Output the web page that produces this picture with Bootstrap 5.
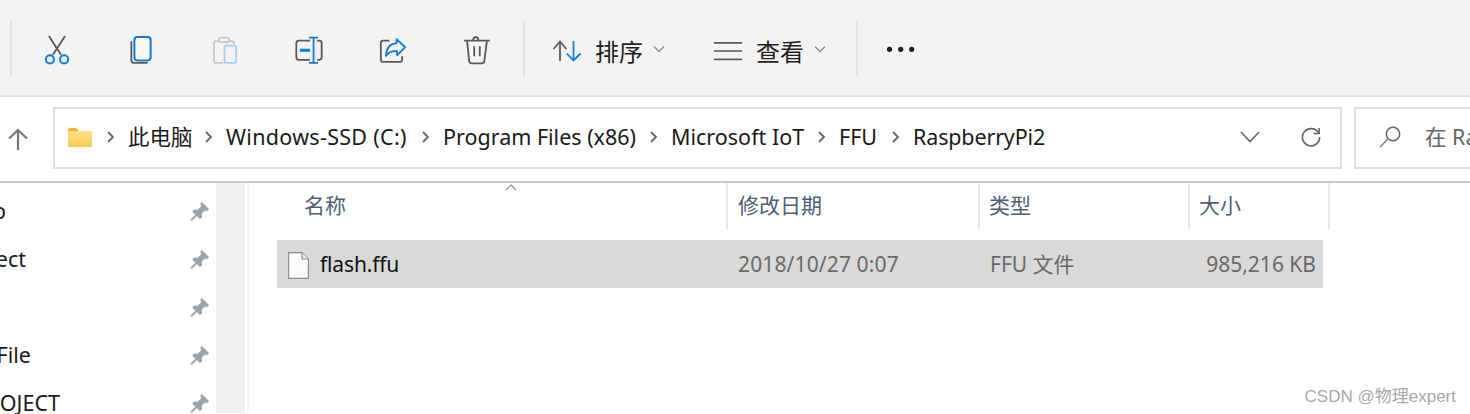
<!DOCTYPE html>
<html lang="zh-CN">
<head>
    <meta charset="UTF-8">
    <title>RaspberryPi2</title>
    <link href="https://cdn.jsdelivr.net/npm/bootstrap@5.3.0/dist/css/bootstrap.min.css" rel="stylesheet">
    <style>
        html, body { height: 414px; overflow: hidden; }
        body { font-family: "Noto Sans", "Noto Sans CJK SC", sans-serif; font-size: 21px; color: #1a1a1a; background: #fff; position: relative; }
        svg { display: block; flex-shrink: 0; }
        .tool-bar { height: 97px; background: #f3f3f3; border-bottom: 2px solid #e3e3e3; padding-top: 3px; padding-left: 10px; }
        .tool-sep { width: 2px; height: 56px; background: #e3e3e3; flex-shrink: 0; }
        .sep-first { margin-right: 3px; }
        .sep-second { margin-left: 4px; margin-right: 27px; }
        .sep-third { margin-left: 30px; margin-right: 28px; }
        .tool-btn { width: 84px; flex-shrink: 0; }
        .tool-label { font-size: 24px; line-height: 32px; margin-top: 4px; margin-left: 13px; margin-right: 10px; color: #1f1f1f; font-family: "Noto Sans CJK SC", sans-serif; }
        .view-ico { margin-left: 48px; }
        .addr-row { height: 86px; border-bottom: 2px solid #c8c8c8; padding-top: 10px; }
        .up-cell { width: 53px; flex-shrink: 0; padding-top: 21px; padding-left: 8px; }
        .addr-box { width: 1289px; flex-shrink: 0; height: 62px; border: 2px solid #dedede; padding-left: 12px; padding-right: 19px; padding-bottom: 2px; font-size: 21.5px; }
        .crumb-sep { width: 36px; flex-shrink: 0; }
        .crumb-first { width: 35px; flex-shrink: 0; }
        .crumb { white-space: nowrap; flex-shrink: 0; }
        .crumb-pc { width: 62px; }
        .crumb-disk { width: 181px; letter-spacing: .3px; }
        .crumb-prog { width: 192px; }
        .crumb-ms { width: 132px; }
        .crumb-ffu { width: 38px; }
        .crumb-pi { letter-spacing: -.15px; }
        .refresh-ico { margin-left: 41px; }
        .search-box { flex: 1; min-width: 0; overflow: hidden; height: 62px; margin-left: 12px; border: 2px solid #dedede; border-right: 0; padding-left: 23px; padding-bottom: 2px; color: #666; white-space: nowrap; font-size: 21.5px; }
        .main-area { height: 230px; }
        .side-pane { width: 216px; flex-shrink: 0; padding-top: 4px; }
        .side-row { height: 48px; font-size: 21.5px; padding-right: 6px; }
        .side-clip { overflow: hidden; white-space: nowrap; }
        .clip-a { width: 6px; }
        .clip-b { width: 26px; }
        .clip-c { width: 31px; }
        .clip-d { width: 60px; }
        .scroll-track { width: 29px; flex-shrink: 0; background: #f0f0f0; }
        .scroll-gap { width: 2px; flex-shrink: 0; margin-left: 2px; background: #f5f5f5; }
        .file-pane { flex: 1; position: relative; }
        .head-row { height: 46px; color: #4d6078; }
        .col-name { width: 477px; padding-left: 55px; }
        .col-date { width: 252px; padding-left: 10px; border-left: 2px solid #e8e8e8; }
        .col-type { width: 210px; padding-left: 9px; border-left: 2px solid #e8e8e8; }
        .col-size { width: 142px; padding-left: 9px; border-left: 2px solid #e8e8e8; border-right: 2px solid #e8e8e8; }
        .sort-caret { position: absolute; left: 256px; top: 1px; }
        .file-row { width: 1046px; height: 48px; margin-left: 28px; margin-top: 11px; padding-top: 2px; background: #d9d9d9; border-radius: 2px; color: #6a6a6a; }
        .cell-name { width: 450px; padding-left: 11px; color: #111; }
        .file-title { margin-left: 11px; letter-spacing: -.15px; }
        .cell-date { width: 252px; padding-left: 11px; letter-spacing: .13px; }
        .cell-type { width: 210px; padding-left: 11px; }
        .cell-size { width: 134px; padding-right: 7px; text-align: right; }
        .csdn-mark { position: absolute; right: 14px; bottom: 6px; font-size: 17px; line-height: 22px; color: #a8a8a8; font-family: "Liberation Sans", "Noto Sans CJK SC", sans-serif; }
    </style>
</head>
<body>
    <!-- command bar -->
    <div class="tool-bar d-flex align-items-center">
        <div class="tool-sep sep-first"></div>
        <div class="tool-btn d-flex justify-content-center">
            <svg width="36" height="36" viewBox="38.250 30 35.500 35.500" fill="none" stroke-width="1.8">
                <path d="M48 35 60 53.5M64 35 52 53.5" stroke="#5a5a5a"/>
                <circle cx="49" cy="58" r="4" stroke="#0f7ddb" stroke-width="2"/>
                <circle cx="63" cy="58" r="4" stroke="#0f7ddb" stroke-width="2"/>
            </svg>
        </div>
        <div class="tool-btn d-flex justify-content-center">
            <svg width="36" height="36" viewBox="121.750 30 35.500 35.500" fill="none" stroke-width="1.8">
                <path d="M130 40V58.5a3 3 0 0 0 3 3H146" stroke="#5a5a5a"/>
                <rect x="133" y="36" width="16" height="23" rx="3" fill="#f9f9f9" stroke="#0f7ddb" stroke-width="2"/>
            </svg>
        </div>
        <div class="tool-btn d-flex justify-content-center">
            <svg width="36" height="36" viewBox="203.750 30 35.500 35.500" fill="none" stroke-width="1.8">
                <path d="M215 40H213a2.500 2.500 0 0 0-2.500 2.500V59a2.500 2.500 0 0 0 2.500 2.500H220M226 40h2a2.500 2.500 0 0 1 2.500 2.500V43" stroke="#c6c6c6"/>
                <rect x="215.500" y="36.500" width="10" height="4.500" rx="1.500" stroke="#c6c6c6"/>
                <rect x="221" y="44.500" width="11.500" height="17" rx="2" stroke="#a9cff0"/>
            </svg>
        </div>
        <div class="tool-btn d-flex justify-content-center">
            <svg width="36" height="36" viewBox="287.250 30 35.500 35.500" fill="none" stroke-width="1.8">
                <path d="M306 39.500H295a2.500 2.500 0 0 0-2.500 2.500V56a2.500 2.500 0 0 0 2.500 2.500H306M313 39.500h2a2.500 2.500 0 0 1 2.500 2.500V56a2.500 2.500 0 0 1-2.500 2.500h-2" stroke="#5a5a5a"/>
                <path d="M309.500 36V62M305 36.500h9M305 61.500h9" stroke="#0f7ddb"/>
                <path d="M296 49h10" stroke="#0f7ddb" stroke-width="3"/>
            </svg>
        </div>
        <div class="tool-btn d-flex justify-content-center">
            <svg width="36" height="36" viewBox="370.750 30 35.500 35.500" fill="none" stroke-width="1.8">
                <path d="M385 39.500H379a2.500 2.500 0 0 0-2.500 2.500V58a2.500 2.500 0 0 0 2.500 2.500H395a2.500 2.500 0 0 0 2.500-2.500V55" stroke="#5a5a5a"/>
                <path d="M392 38 400.500 46 392.500 54V50C387 49.500 384 51 381.500 54.500 382 47 386 42.500 392 42Z" stroke="#0f7ddb" stroke-linejoin="round"/>
            </svg>
        </div>
        <div class="tool-btn d-flex justify-content-center">
            <svg width="36" height="36" viewBox="453 30 35.500 35.500" fill="none" stroke="#5a5a5a" stroke-width="1.8">
                <path d="M458 39.500H483.500M472 39.500V38.500a2.500 2.500 0 0 0-5 0V39.500"/>
                <path d="M461 40 463 59.500a2.500 2.500 0 0 0 2.500 2.500H475.500a2.500 2.500 0 0 0 2.500-2.500L480.500 40"/>
                <path d="M468 45V55M473.500 45V55"/>
            </svg>
        </div>
        <div class="tool-sep sep-second"></div>
        <div class="d-flex align-items-center">
            <svg width="30" height="30" viewBox="552 34 30 30" fill="none" stroke-width="1.8">
                <path d="M560 61V41.500M553.500 49 560 41.500 566.500 49" stroke="#5a5a5a"/>
                <path d="M573.500 41V60M566.800 53.500 573.500 60.500 580.500 53.500" stroke="#0f7ddb"/>
            </svg>
            <span class="tool-label">排序</span>
            <svg width="12" height="8" viewBox="0 0 12 8" fill="none" stroke="#8a8a8a" stroke-width="1.300"><path d="M1 1.500 6 6.500 11 1.500"/></svg>
        </div>
        <div class="d-flex align-items-center">
            <svg class="view-ico" width="30" height="30" viewBox="713 34 30 30" fill="none" stroke="#5a5a5a" stroke-width="1.700">
                <path d="M714 42.800H742M714 51H742M714 59.300H742"/>
            </svg>
            <span class="tool-label">查看</span>
            <svg width="12" height="8" viewBox="0 0 12 8" fill="none" stroke="#8a8a8a" stroke-width="1.300"><path d="M1 1.500 6 6.500 11 1.500"/></svg>
        </div>
        <div class="tool-sep sep-third"></div>
        <svg width="30" height="8" viewBox="886 45 30 8" fill="#1e1e1e">
            <circle cx="889.500" cy="49.300" r="2.600"/><circle cx="900.700" cy="49.300" r="2.600"/><circle cx="911.700" cy="49.300" r="2.600"/>
        </svg>
    </div>

    <!-- address row -->
    <div class="addr-row d-flex align-items-start">
        <div class="up-cell">
            <svg width="20" height="22" viewBox="0 0 20 22" fill="none" stroke="#777" stroke-width="2.200"><path d="M10 22V2M1 10.500 10 2 19 10.500"/></svg>
        </div>
        <div class="addr-box d-flex align-items-center">
            <svg width="26" height="21" viewBox="0 0 26 21">
                <defs><linearGradient id="folderFill" x1="0" y1="0" x2="0" y2="1"><stop offset="0" stop-color="#fde08a"/><stop offset="1" stop-color="#fbcb52"/></linearGradient></defs>
                <path d="M1 3a2 2 0 0 1 2-2h6l3 3v3H1Z" fill="#f2b42c"/>
                <rect x="1" y="4" width="24" height="16" rx="1.500" fill="url(#folderFill)"/>
            </svg>
            <span class="crumb-first d-flex justify-content-center"><svg width="7" height="12" viewBox="0 0 7 12" fill="none" stroke="#666" stroke-width="1.800"><path d="M1 1 6 6 1 11"/></svg></span>
            <span class="crumb crumb-pc">此电脑</span>
            <span class="crumb-sep d-flex justify-content-center"><svg width="7" height="12" viewBox="0 0 7 12" fill="none" stroke="#666" stroke-width="1.800"><path d="M1 1 6 6 1 11"/></svg></span>
            <span class="crumb crumb-disk">Windows-SSD (C:)</span>
            <span class="crumb-sep d-flex justify-content-center"><svg width="7" height="12" viewBox="0 0 7 12" fill="none" stroke="#666" stroke-width="1.800"><path d="M1 1 6 6 1 11"/></svg></span>
            <span class="crumb crumb-prog">Program Files (x86)</span>
            <span class="crumb-sep d-flex justify-content-center"><svg width="7" height="12" viewBox="0 0 7 12" fill="none" stroke="#666" stroke-width="1.800"><path d="M1 1 6 6 1 11"/></svg></span>
            <span class="crumb crumb-ms">Microsoft IoT</span>
            <span class="crumb-sep d-flex justify-content-center"><svg width="7" height="12" viewBox="0 0 7 12" fill="none" stroke="#666" stroke-width="1.800"><path d="M1 1 6 6 1 11"/></svg></span>
            <span class="crumb crumb-ffu">FFU</span>
            <span class="crumb-sep d-flex justify-content-center"><svg width="7" height="12" viewBox="0 0 7 12" fill="none" stroke="#666" stroke-width="1.800"><path d="M1 1 6 6 1 11"/></svg></span>
            <span class="crumb crumb-pi">RaspberryPi2</span>
            <svg class="ms-auto" width="20" height="12" viewBox="0 0 20 12" fill="none" stroke="#666" stroke-width="1.600"><path d="M1 1 10 10.500 19 1"/></svg>
            <svg class="refresh-ico" width="20" height="20" viewBox="0 0 22 22" fill="none" stroke="#666" stroke-width="1.800">
                <path d="M19.500 7A9.500 9.500 0 1 0 20.500 11"/><path d="M20 1V7.200H13.800"/>
            </svg>
        </div>
        <div class="search-box d-flex align-items-center">
            <svg width="22" height="22" viewBox="0 0 22 22" fill="none" stroke-width="1.500">
                <circle cx="14" cy="8" r="6.700" stroke="#666"/>
                <path d="M9 13 1 21" stroke="#5b85ad"/>
            </svg>
            <span class="ms-4">在 Ra</span>
        </div>
    </div>

    <!-- nav pane + file list -->
    <div class="main-area d-flex">
        <div class="side-pane">
            <div class="side-row d-flex align-items-center justify-content-between">
                <div class="side-clip clip-a d-flex justify-content-end"><span>p</span></div>
                <svg width="20" height="20" viewBox="0 0 22 22" fill="#9aa2aa" stroke="#9aa2aa"><path d="M13 1.500 20.500 9 19 10.500 16.500 10 12.500 14 12.500 18 11 19.500 7.500 16 2 21.500 1 20.500 6.500 15 3 11.500 4.500 10 8.500 10 12.500 6 12 3.500Z"/></svg>
            </div>
            <div class="side-row d-flex align-items-center justify-content-between">
                <div class="side-clip clip-b d-flex justify-content-end"><span>ect</span></div>
                <svg width="20" height="20" viewBox="0 0 22 22" fill="#9aa2aa" stroke="#9aa2aa"><path d="M13 1.500 20.500 9 19 10.500 16.500 10 12.500 14 12.500 18 11 19.500 7.500 16 2 21.500 1 20.500 6.500 15 3 11.500 4.500 10 8.500 10 12.500 6 12 3.500Z"/></svg>
            </div>
            <div class="side-row d-flex align-items-center justify-content-end">
                <svg width="20" height="20" viewBox="0 0 22 22" fill="#9aa2aa" stroke="#9aa2aa"><path d="M13 1.500 20.500 9 19 10.500 16.500 10 12.500 14 12.500 18 11 19.500 7.500 16 2 21.500 1 20.500 6.500 15 3 11.500 4.500 10 8.500 10 12.500 6 12 3.500Z"/></svg>
            </div>
            <div class="side-row d-flex align-items-center justify-content-between">
                <div class="side-clip clip-c d-flex justify-content-end"><span>File</span></div>
                <svg width="20" height="20" viewBox="0 0 22 22" fill="#9aa2aa" stroke="#9aa2aa"><path d="M13 1.500 20.500 9 19 10.500 16.500 10 12.500 14 12.500 18 11 19.500 7.500 16 2 21.500 1 20.500 6.500 15 3 11.500 4.500 10 8.500 10 12.500 6 12 3.500Z"/></svg>
            </div>
            <div class="side-row d-flex align-items-center justify-content-between">
                <div class="side-clip clip-d d-flex justify-content-end"><span>OJECT</span></div>
                <svg width="20" height="20" viewBox="0 0 22 22" fill="#9aa2aa" stroke="#9aa2aa"><path d="M13 1.500 20.500 9 19 10.500 16.500 10 12.500 14 12.500 18 11 19.500 7.500 16 2 21.500 1 20.500 6.500 15 3 11.500 4.500 10 8.500 10 12.500 6 12 3.500Z"/></svg>
            </div>
        </div>
        <div class="scroll-track"></div>
        <div class="scroll-gap"></div>
        <div class="file-pane">
            <svg class="sort-caret" width="12" height="7" viewBox="0 0 12 7" fill="none" stroke="#8a8a8a" stroke-width="1.200"><path d="M1 6 6 1 11 6"/></svg>
            <div class="head-row d-flex">
                <div class="col-name d-flex align-items-center">名称</div>
                <div class="col-date d-flex align-items-center">修改日期</div>
                <div class="col-type d-flex align-items-center">类型</div>
                <div class="col-size d-flex align-items-center">大小</div>
            </div>
            <div class="file-row d-flex align-items-center">
                <div class="cell-name d-flex align-items-center">
                    <svg width="21" height="27" viewBox="0 0 21 27" fill="#fbfbfb" stroke="#8c8c8c" stroke-width="1.200"><path d="M.6.6H14L20.400 7V26.400H.6Z"/><path d="M14 .6V7H20.400" fill="#e8e8e8"/></svg>
                    <span class="file-title">flash.ffu</span>
                </div>
                <div class="cell-date">2018/10/27 0:07</div>
                <div class="cell-type">FFU 文件</div>
                <div class="cell-size">985,216 KB</div>
            </div>
        </div>
    </div>

    <div class="csdn-mark">CSDN @物理expert</div>
</body>
</html>
